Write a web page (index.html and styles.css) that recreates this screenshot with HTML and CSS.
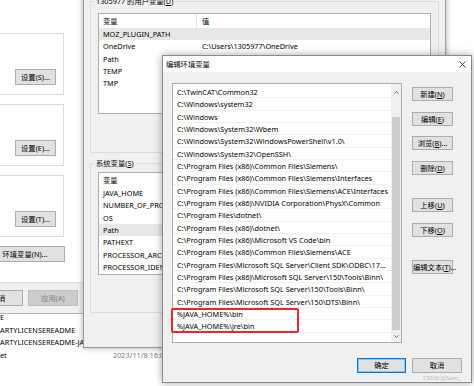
FILE: index.html
```html
<!DOCTYPE html>
<html lang="zh-CN">
<head>
    <meta charset="UTF-8">
    <meta name="viewport" content="width=device-width, initial-scale=1.0">
    <title>编辑环境变量</title>
    <link rel="stylesheet" href="styles.css">
</head>
<body>
    <!-- Explorer file list in the background -->
    <div class="explorer">
        <div class="file-row"><span class="file-name">E</span></div>
        <div class="file-row"><span class="file-name">ARTYLICENSEREADME</span></div>
        <div class="file-row"><span class="file-name">ARTYLICENSEREADME-JAVAFX</span></div>
        <div class="file-row"><span class="file-name">et</span><span class="file-date">2023/11/8 16:05</span></div>
    </div>

    <!-- System properties -->
    <div class="window sys-win">
        <div class="tab-page">
            <div class="group-box"><button class="btn btn-set">设置(S)...</button></div>
            <div class="group-box"><button class="btn btn-set">设置(E)...</button></div>
            <div class="group-box"><button class="btn btn-set">设置(T)...</button></div>
            <div class="env-btn-row"><button class="btn btn-env">环境变量(N)...</button></div>
        </div>
        <div class="sys-buttons">
            <button class="btn btn-sys">取消</button>
            <button class="btn btn-sys" disabled>应用(A)</button>
        </div>
    </div>

    <!-- Environment variables -->
    <div class="window env-win">
        <fieldset class="var-group">
            <legend>1305977 的用户变量(<u>U</u>)</legend>
            <div class="list-view user-list">
                <div class="lv-head"><span class="lv-name">变量</span><span class="lv-value">值</span></div>
                <div class="lv-row lv-selected"><span class="lv-name">MOZ_PLUGIN_PATH</span><span class="lv-value"></span></div>
                <div class="lv-row"><span class="lv-name">OneDrive</span><span class="lv-value">C:\Users\1305977\OneDrive</span></div>
                <div class="lv-row"><span class="lv-name">Path</span><span class="lv-value">C:\Users\1305977\AppData\Local\Microsoft\WindowsApps;</span></div>
                <div class="lv-row"><span class="lv-name">TEMP</span><span class="lv-value">C:\Users\1305977\AppData\Local\Temp</span></div>
                <div class="lv-row"><span class="lv-name">TMP</span><span class="lv-value">C:\Users\1305977\AppData\Local\Temp</span></div>
            </div>
            <div class="group-buttons">
                <button class="btn btn-group">新建(N)...</button>
                <button class="btn btn-group">编辑(E)...</button>
                <button class="btn btn-group">删除(D)</button>
            </div>
        </fieldset>

        <fieldset class="var-group sys-group">
            <legend>系统变量(<u>S</u>)</legend>
            <div class="list-view sys-list">
                <div class="lv-head"><span class="lv-name">变量</span><span class="lv-value">值</span></div>
                <div class="lv-row"><span class="lv-name">JAVA_HOME</span><span class="lv-value">C:\Program Files\Java\jdk1.8.0_391</span></div>
                <div class="lv-row"><span class="lv-name">NUMBER_OF_PROCESSORS</span><span class="lv-value">8</span></div>
                <div class="lv-row"><span class="lv-name">OS</span><span class="lv-value">Windows_NT</span></div>
                <div class="lv-row lv-selected"><span class="lv-name">Path</span><span class="lv-value">C:\TwinCAT\Common32;C:\Windows\system32;</span></div>
                <div class="lv-row"><span class="lv-name">PATHEXT</span><span class="lv-value">.COM;.EXE;.BAT;.CMD;.VBS;.VBE;.JS</span></div>
                <div class="lv-row"><span class="lv-name">PROCESSOR_ARCHITECTURE</span><span class="lv-value">AMD64</span></div>
                <div class="lv-row"><span class="lv-name">PROCESSOR_IDENTIFIER</span><span class="lv-value">Intel64 Family 6</span></div>
            </div>
            <div class="group-buttons">
                <button class="btn btn-group">新建(W)...</button>
                <button class="btn btn-group">编辑(I)...</button>
                <button class="btn btn-group">删除(L)</button>
            </div>
        </fieldset>
    </div>

    <!-- Edit environment variable -->
    <div class="window edit-win">
        <div class="title-bar">
            <span class="title-text">编辑环境变量</span>
            <svg class="close-icon" width="7" height="7" viewBox="0 0 7 7">
                <path d="M0.5 0.5L6.5 6.5M6.5 0.5L0.5 6.5" stroke="#222" stroke-width="0.8" fill="none"/>
            </svg>
        </div>
        <div class="edit-body">
            <div class="edit-main">
                <div class="path-list">
                    <div class="path-rows">
                        <div class="path-row">C:\TwinCAT\Common32</div>
                        <div class="path-row">C:\Windows\system32</div>
                        <div class="path-row">C:\Windows</div>
                        <div class="path-row">C:\Windows\System32\Wbem</div>
                        <div class="path-row">C:\Windows\System32\WindowsPowerShell\v1.0\</div>
                        <div class="path-row">C:\Windows\System32\OpenSSH\</div>
                        <div class="path-row">C:\Program Files (x86)\Common Files\Siemens\</div>
                        <div class="path-row">C:\Program Files (x86)\Common Files\Siemens\Interfaces</div>
                        <div class="path-row">C:\Program Files (x86)\Common Files\Siemens\ACE\Interfaces</div>
                        <div class="path-row">C:\Program Files (x86)\NVIDIA Corporation\PhysX\Common</div>
                        <div class="path-row">C:\Program Files\dotnet\</div>
                        <div class="path-row">C:\Program Files (x86)\dotnet\</div>
                        <div class="path-row">C:\Program Files (x86)\Microsoft VS Code\bin</div>
                        <div class="path-row">C:\Program Files (x86)\Common Files\Siemens\ACE</div>
                        <div class="path-row">C:\Program Files\Microsoft SQL Server\Client SDK\ODBC\170\Tools\Binn\</div>
                        <div class="path-row">C:\Program Files (x86)\Microsoft SQL Server\150\Tools\Binn\</div>
                        <div class="path-row">C:\Program Files\Microsoft SQL Server\150\Tools\Binn\</div>
                        <div class="path-row">C:\Program Files\Microsoft SQL Server\150\DTS\Binn\</div>
                        <div class="path-row">%JAVA_HOME%\bin</div>
                        <div class="path-row">%JAVA_HOME%\jre\bin</div>
                        <div class="path-row"></div>
                    </div>
                    <div class="scrollbar">
                        <div class="sb-arrow sb-up">
                            <svg width="5" height="3" viewBox="0 0 5 3"><path d="M0.4 2.7L2.5 0.6L4.6 2.7" fill="none" stroke="#606060" stroke-width="0.9"/></svg>
                        </div>
                        <div class="sb-track"><div class="sb-thumb"></div></div>
                        <div class="sb-arrow sb-down">
                            <svg width="5" height="3" viewBox="0 0 5 3"><path d="M0.4 0.3L2.5 2.4L4.6 0.3" fill="none" stroke="#606060" stroke-width="0.9"/></svg>
                        </div>
                    </div>
                    <!-- red annotation round the JAVA_HOME entries -->
                    <div class="mark-box"></div>
                </div>

                <div class="side-buttons">
                    <button class="btn">新建(<u>N</u>)</button>
                    <button class="btn">编辑(<u>E</u>)</button>
                    <button class="btn">浏览(<u>B</u>)...</button>
                    <button class="btn">删除(<u>D</u>)</button>
                    <button class="btn btn-gap">上移(<u>U</u>)</button>
                    <button class="btn">下移(<u>O</u>)</button>
                    <button class="btn btn-gap">编辑文本(<u>T</u>)...</button>
                </div>
            </div>

            <div class="edit-footer">
                <button class="btn btn-foot btn-default">确定</button>
                <button class="btn btn-foot">取消</button>
            </div>
        </div>
    </div>

    <div class="watermark">CSDN @Sam_</div>
</body>
</html>
```

FILE: styles.css
```css
* {
    box-sizing: border-box;
}

body {
    margin: 0;
    width: 474px;
    height: 386px;
    overflow: hidden;
    position: relative;
    background: #ffffff;
    font-family: "Noto Sans", "Noto Sans CJK SC", sans-serif;
    font-size: 7.3px;
    color: #000000;
}

.window {
    position: absolute;
    background: #f0f0f0;
}

/* buttons */
.btn {
    font: inherit;
    color: #000000;
    background: #e1e1e1;
    border: 1px solid #adadad;
    padding: 0;
    height: 14px;
    line-height: 12px;
    text-align: center;
    white-space: nowrap;
}

.btn:disabled {
    background: #cccccc;
    border-color: #bfbfbf;
    color: #838383;
}

/* explorer behind */
.explorer {
    position: absolute;
    left: 0;
    top: 311px;
    width: 474px;
}

.file-row {
    display: flex;
    height: 12.5px;
    line-height: 12.5px;
    white-space: nowrap;
}

.file-name {
    width: 113px;
    overflow: hidden;
}

.file-date {
    color: #7a7a7a;
}

/* system properties */
.sys-win {
    left: -190px;
    top: 0;
    width: 280px;
    height: 314px;
    border-bottom: 1px solid #b4b4b4;
}

.tab-page {
    height: 283px;
    margin-right: 6px;
    padding: 33px 20px 0 0;
    background: #ffffff;
    border-bottom: 1px solid #dadada;
}

.group-box {
    height: 62px;
    margin-bottom: 9px;
    border: 1px solid #dcdcdc;
    display: flex;
    justify-content: flex-end;
    align-items: flex-end;
    padding: 0 7px 9px 0;
}

.btn-set {
    width: 41px;
    height: 16px;
    line-height: 14px;
}

.env-btn-row {
    display: flex;
    justify-content: flex-end;
    margin-right: -1px;
}

.btn-env {
    width: 80px;
    height: 16px;
    line-height: 14px;
}

.sys-buttons {
    display: flex;
    justify-content: flex-end;
    gap: 5px;
    padding: 7px 12px 0 0;
}

.btn-sys {
    width: 50px;
    height: 16px;
    line-height: 14px;
}

/* environment variables */
.env-win {
    left: 83px;
    top: -40px;
    width: 363px;
    height: 388px;
    border: 1px solid #9a9a9a;
    box-shadow: 0 0 6px rgba(0, 0, 0, 0.35);
    padding: 35px 6px 0 6px;
}

.var-group {
    margin: 0;
    min-width: 0;
    border: 1px solid #dcdcdc;
    padding: 0 7px;
}

.var-group legend {
    padding: 0 2px;
    margin-left: -4px;
    height: 10px;
    line-height: 10px;
}

.sys-group {
    margin-top: 5px;
}

.list-view {
    background: #ffffff;
    border: 1px solid #adadad;
    overflow: hidden;
    white-space: nowrap;
}

.user-list {
    margin-top: 7px;
    height: 101px;
}

.sys-list {
    margin-top: 4px;
    height: 103px;
}

.lv-head,
.lv-row {
    display: flex;
}

.lv-head {
    height: 14px;
    line-height: 14px;
}

.lv-head .lv-name {
    border-right: 1px solid #e5e5e5;
}

.lv-row {
    height: 12.35px;
    line-height: 12.35px;
}

.lv-selected {
    background: #e8e8e8;
}

.lv-name {
    width: 98px;
    padding-left: 4px;
    overflow: hidden;
}

.lv-value {
    padding-left: 5px;
}

.group-buttons {
    display: flex;
    justify-content: flex-end;
    gap: 6px;
    height: 38px;
    padding-top: 9px;
}

.sys-group .group-buttons {
    height: 37px;
}

.btn-group {
    width: 48px;
    height: 15px;
}

/* edit environment variable */
.edit-win {
    left: 162px;
    top: 55px;
    width: 310px;
    height: 328px;
    border: 1px solid #8a8a8a;
    box-shadow: 0 0 8px rgba(0, 0, 0, 0.35);
    display: flex;
    flex-direction: column;
}

.title-bar {
    height: 16px;
    background: #ffffff;
    display: flex;
    align-items: center;
    padding-left: 3px;
}

.close-icon {
    margin-left: auto;
    margin-right: 5px;
}

.edit-body {
    flex: 1;
    padding: 11px 9px 0 9px;
}

.edit-main {
    display: flex;
    align-items: flex-start;
}

.path-list {
    position: relative;
    width: 230px;
    height: 260px;
    border: 1px solid #adadad;
    background: #ffffff;
    display: flex;
}

.path-rows {
    flex: 1;
    min-width: 0;
    padding-top: 2px;
    overflow: hidden;
}

.path-row {
    height: 12.33px;
    line-height: 12.33px;
    padding: 0 3px 0 4px;
    white-space: nowrap;
    overflow: hidden;
    text-overflow: ellipsis;
    box-shadow: inset 0 -1px 0 #f0f0f0;
}

.scrollbar {
    width: 10px;
    background: #f0f0f0;
    display: flex;
    flex-direction: column;
}

.sb-arrow {
    display: flex;
    align-items: center;
    justify-content: center;
}

.sb-up {
    height: 16px;
}

.sb-down {
    height: 12px;
}

.sb-track {
    flex: 1;
    padding: 17px 1px 0 1px;
}

.sb-thumb {
    height: 213px;
    background: #cdcdcd;
}

.mark-box {
    position: absolute;
    left: -2px;
    top: 224px;
    width: 128px;
    height: 25px;
    border: 2px solid #e8262b;
    border-radius: 2px;
}

.side-buttons {
    width: 41px;
    margin-left: 10px;
    padding-top: 4px;
    display: flex;
    flex-direction: column;
    gap: 10.7px;
}

.btn-gap {
    margin-top: 12.3px;
}

.edit-footer {
    display: flex;
    justify-content: flex-end;
    gap: 6px;
    margin-top: 15px;
}

.btn-foot {
    width: 50px;
    height: 15px;
    line-height: 13px;
}

.btn-default {
    width: 49px;
    border-color: #0078d7;
    box-shadow: inset 0 0 0 1px #8cc0ef;
}

.watermark {
    position: absolute;
    left: 423px;
    top: 374px;
    font-size: 6px;
    line-height: 8px;
    color: #b9b9b9;
}
```
